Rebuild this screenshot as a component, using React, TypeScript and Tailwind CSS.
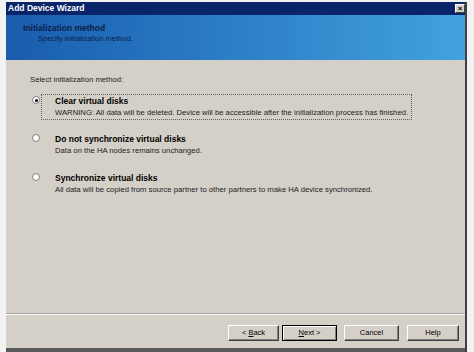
import React from "react";

const font = { fontFamily: '"Liberation Sans", Arial, sans-serif' };

const Radio = ({ checked }: { checked?: boolean }) => (
  <div className="w-[8px] h-[8px] rounded-full bg-white border border-[#808080] flex items-center justify-center shrink-0 mt-[2px]">
    {checked && <div className="w-[3px] h-[3px] rounded-full bg-black" />}
  </div>
);

const Option = ({
  title,
  desc,
  checked,
  focused,
}: {
  title: string;
  desc: string;
  checked?: boolean;
  focused?: boolean;
}) => (
  <div className="flex items-start gap-[1px] pl-[26px]">
    <Radio checked={checked} />
    <div
      className={
        "flex flex-col pl-[13px] py-[1px] whitespace-nowrap " +
        (focused ? "border border-dotted border-[#606060] w-[371px]" : "border border-transparent")
      }
    >
      <span className="font-bold text-[8.5px] leading-[11px] text-black">{title}</span>
      <span className="text-[7.7px] leading-[11px] text-[#222]">{desc}</span>
    </div>
  </div>
);

const Btn = ({ label, def, w }: { label: React.ReactNode; def?: boolean; w: string }) => (
  <div
    className={
      "h-[16px] flex items-center justify-center text-[7.5px] text-black bg-[#d4d0c8] " +
      w +
      " " +
      (def
        ? "border border-black shadow-[inset_1px_1px_0_#fff,inset_-1px_-1px_0_#808080]"
        : "border-t border-l border-white border-r border-b border-r-[#404040] border-b-[#404040] shadow-[inset_-1px_-1px_0_#808080]")
    }
  >
    {label}
  </div>
);

export default function App() {
  return (
    <div className="w-[474px] h-[352px] bg-[#f2f2f2] overflow-hidden" style={font}>
      <div className="ml-[6px] mt-[2px] w-[461px] h-[350px] flex flex-col bg-[#d4d0c8] border-r-2 border-r-[#404040]">
        <div className="h-[13px] bg-[#0a246a] flex items-center justify-between pl-[2px] pr-[0px]">
          <span className="text-white font-bold text-[8.5px]">Add Device Wizard</span>
          <div className="w-[10px] h-[9px] bg-[#d4d0c8] border-t border-l border-white border-r border-b border-r-[#404040] border-b-[#404040] flex items-center justify-center text-[8px] leading-none font-bold text-black">
            ×
          </div>
        </div>
        <div className="h-[45px] bg-gradient-to-r from-[#1a5cae] to-[#42a2de] pl-[17px] pt-[8px] flex flex-col">
          <span className="font-bold text-[8.5px] leading-[11px] text-[#0a1f4a]">Initialization method</span>
          <span className="pl-[15px] text-[7.5px] leading-[10px] text-[#0a1f4a]">Specify initialization method.</span>
        </div>
        <div className="flex-1 flex flex-col pt-[15px]">
          <span className="pl-[24px] text-[7.7px] leading-[10px] text-[#222]">Select initialization method:</span>
          <div className="flex flex-col gap-[12px] mt-[9px]">
            <Option
              checked
              focused
              title="Clear virtual disks"
              desc="WARNING: All data will be deleted. Device will be accessible after the initialization process has finished."
            />
            <Option title="Do not synchronize virtual disks" desc="Data on the HA nodes remains unchanged." />
            <div className="mt-[1px]">
              <Option
                title="Synchronize virtual disks"
                desc="All data will be copied from source partner to other partners to make HA device synchronized."
              />
            </div>
          </div>
        </div>
        <div className="h-[2px] border-t border-[#a0a0a0] border-b border-b-white" />
        <div className="h-[33px] flex items-start pl-[222px] pt-[10px]">
          <Btn w="w-[51px]" label={<span>&lt; <u>B</u>ack</span>} />
          <div className="w-[3px]" />
          <Btn w="w-[55px]" def label={<span><u>N</u>ext &gt;</span>} />
          <div className="w-[7px]" />
          <Btn w="w-[55px]" label="Cancel" />
          <div className="w-[8px]" />
          <Btn w="w-[52px]" label="Help" />
        </div>
        <div className="h-[4px] bg-[#5a5a5a]" />
      </div>
    </div>
  );
}
